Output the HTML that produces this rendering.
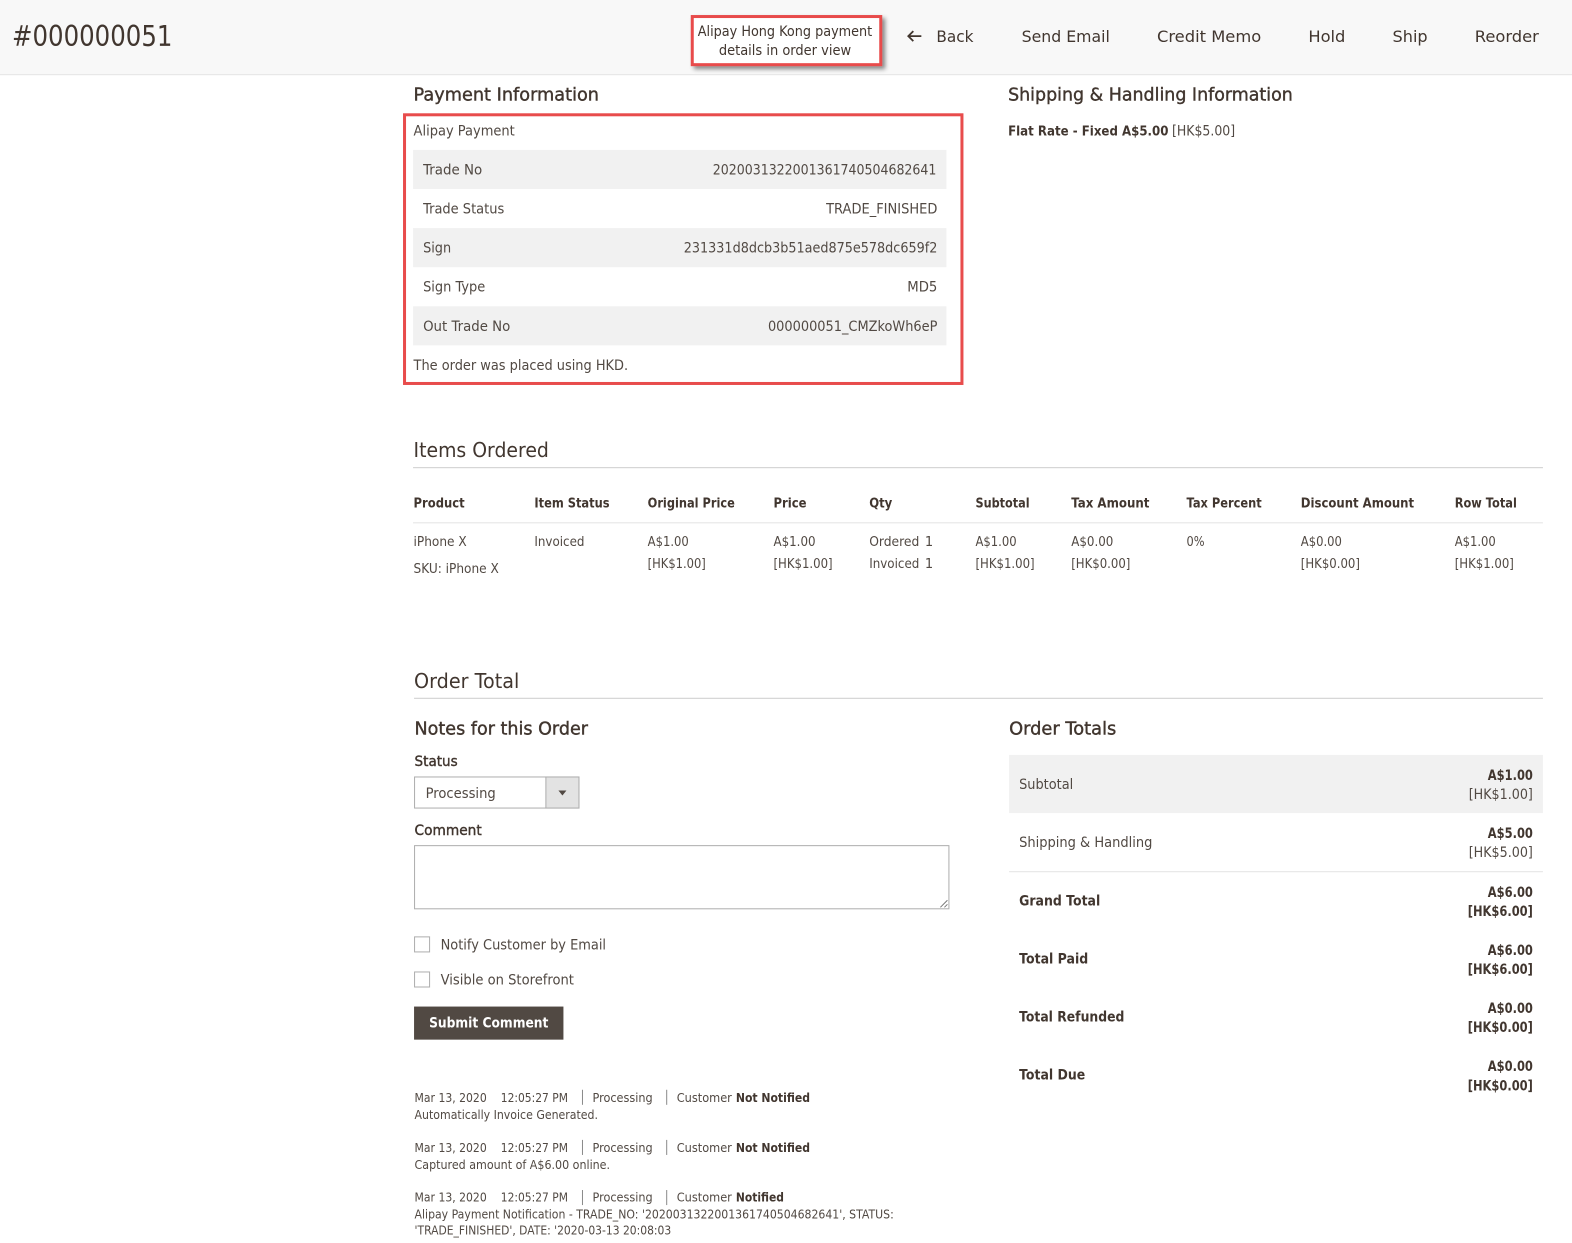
<!DOCTYPE html>
<html lang="en"><head><meta charset="utf-8"><title>Order #000000051</title>
<style>
html,body{margin:0;padding:0;background:#fff}
svg{display:block}
text{font-family:"DejaVu Sans","Liberation Sans",sans-serif;fill:#514943;white-space:pre}
.d{fill:#41362f}
.s{fill:#41362f;stroke:#41362f;stroke-width:.4}
.b{fill:#41362f;font-weight:700}
.f14{font-size:14px}.f13{font-size:13px}.f12{font-size:12px}.f18{font-size:18px}.f16{font-size:16px}
</style></head><body>
<svg width="1572" height="1243" viewBox="0 0 1568 1239.840" xmlns="http://www.w3.org/2000/svg">
<defs><filter id="sh" x="-10%" y="-20%" width="125%" height="150%"><feDropShadow dx="3" dy="3" stdDeviation="2" flood-color="#000" flood-opacity=".45"/></filter></defs>
<rect x="0" y="0" width="1568" height="74" fill="#f8f8f8"/>
<rect x="0" y="74" width="1568" height="1" fill="#e3e3e3"/>
<text class="d" x="12" y="46" font-size="28" textLength="160" lengthAdjust="spacingAndGlyphs">#000000051</text>
<rect x="690.500" y="16.500" width="188" height="48" fill="#fff" stroke="#e84c4c" stroke-width="3" filter="url(#sh)"/>
<text class="d f14" x="696" y="36" textLength="174" lengthAdjust="spacingAndGlyphs">Alipay Hong Kong payment</text>
<text class="d f14" x="717" y="55" textLength="132" lengthAdjust="spacingAndGlyphs">details in order view</text>
<path d="M919 36H906M911 31L906 36L911 41" fill="none" stroke="#41362f" stroke-width="1.800"/>
<text class="d f16" x="934" y="42" textLength="37" lengthAdjust="spacingAndGlyphs">Back</text>
<text class="d f16" x="1019" y="42" textLength="88" lengthAdjust="spacingAndGlyphs">Send Email</text>
<text class="d f16" x="1154" y="42" textLength="104" lengthAdjust="spacingAndGlyphs">Credit Memo</text>
<text class="d f16" x="1305" y="42" textLength="37" lengthAdjust="spacingAndGlyphs">Hold</text>
<text class="d f16" x="1389" y="42" textLength="35" lengthAdjust="spacingAndGlyphs">Ship</text>
<text class="d f16" x="1471" y="42" textLength="64" lengthAdjust="spacingAndGlyphs">Reorder</text>

<text class="s f18" x="412.500" y="100" textLength="185" lengthAdjust="spacingAndGlyphs">Payment Information</text>
<text class="s f18" x="1005.500" y="100" textLength="284" lengthAdjust="spacingAndGlyphs">Shipping &amp; Handling Information</text>
<rect x="403.500" y="114.500" width="556" height="268" fill="none" stroke="#e84c4c" stroke-width="3"/>
<text class="f14" x="412.500" y="135" textLength="101" lengthAdjust="spacingAndGlyphs">Alipay Payment</text>
<rect x="412" y="149.500" width="532" height="39" fill="#f1f1f1"/>
<rect x="412" y="227.500" width="532" height="39" fill="#f1f1f1"/>
<rect x="412" y="305.500" width="532" height="39" fill="#f1f1f1"/>
<text class="f14" x="422" y="174" textLength="59" lengthAdjust="spacingAndGlyphs">Trade No</text>
<text class="f14" x="711" y="174" textLength="223" lengthAdjust="spacingAndGlyphs">2020031322001361740504682641</text>
<text class="f14" x="422" y="213" textLength="81" lengthAdjust="spacingAndGlyphs">Trade Status</text>
<text class="f14" x="824" y="213" textLength="111" lengthAdjust="spacingAndGlyphs">TRADE_FINISHED</text>
<text class="f14" x="422" y="252" textLength="28" lengthAdjust="spacingAndGlyphs">Sign</text>
<text class="f14" x="682" y="252" textLength="253" lengthAdjust="spacingAndGlyphs">231331d8dcb3b51aed875e578dc659f2</text>
<text class="f14" x="422" y="291" textLength="62" lengthAdjust="spacingAndGlyphs">Sign Type</text>
<text class="f14" x="905" y="291" textLength="30" lengthAdjust="spacingAndGlyphs">MD5</text>
<text class="f14" x="422" y="330" textLength="87" lengthAdjust="spacingAndGlyphs">Out Trade No</text>
<text class="f14" x="766" y="330" textLength="169" lengthAdjust="spacingAndGlyphs">000000051_CMZkoWh6eP</text>
<text class="f14" x="412.500" y="369" textLength="214" lengthAdjust="spacingAndGlyphs">The order was placed using HKD.</text>
<text class="b f13" x="1005.500" y="135" textLength="160" lengthAdjust="spacingAndGlyphs">Flat Rate - Fixed A$5.00</text>
<text class="f14" x="1169" y="135" textLength="63" lengthAdjust="spacingAndGlyphs">[HK$5.00]</text>

<text class="d" font-size="20" x="412.500" y="456" textLength="135" lengthAdjust="spacingAndGlyphs">Items Ordered</text>
<rect x="412" y="466" width="1127" height="1" fill="#ccc"/>
<text class="b f13" x="412.500" y="506" textLength="51" lengthAdjust="spacingAndGlyphs">Product</text>
<text class="b f13" x="533" y="506" textLength="75" lengthAdjust="spacingAndGlyphs">Item Status</text>
<text class="b f13" x="646" y="506" textLength="87" lengthAdjust="spacingAndGlyphs">Original Price</text>
<text class="b f13" x="771.500" y="506" textLength="33" lengthAdjust="spacingAndGlyphs">Price</text>
<text class="b f13" x="867" y="506" textLength="23" lengthAdjust="spacingAndGlyphs">Qty</text>
<text class="b f13" x="973" y="506" textLength="54" lengthAdjust="spacingAndGlyphs">Subtotal</text>
<text class="b f13" x="1068.500" y="506" textLength="78" lengthAdjust="spacingAndGlyphs">Tax Amount</text>
<text class="b f13" x="1183.500" y="506" textLength="75" lengthAdjust="spacingAndGlyphs">Tax Percent</text>
<text class="b f13" x="1297.500" y="506" textLength="113" lengthAdjust="spacingAndGlyphs">Discount Amount</text>
<text class="b f13" x="1451" y="506" textLength="62" lengthAdjust="spacingAndGlyphs">Row Total</text>
<rect x="412" y="521" width="1127" height="1" fill="#e3e3e3"/>
<text class="f13" x="412.500" y="544.500" textLength="53" lengthAdjust="spacingAndGlyphs">iPhone X</text>
<text class="f13" x="412.500" y="571.500" textLength="85" lengthAdjust="spacingAndGlyphs">SKU: iPhone X</text>
<text class="f13" x="533" y="544.500" textLength="50" lengthAdjust="spacingAndGlyphs">Invoiced</text>
<text class="f13" x="646" y="544.500" textLength="41" lengthAdjust="spacingAndGlyphs">A$1.00</text>
<text class="f13" x="646" y="566.500" textLength="58" lengthAdjust="spacingAndGlyphs">[HK$1.00]</text>
<text class="f13" x="771.500" y="544.500" textLength="42" lengthAdjust="spacingAndGlyphs">A$1.00</text>
<text class="f13" x="771.500" y="566.500" textLength="59" lengthAdjust="spacingAndGlyphs">[HK$1.00]</text>
<text class="f13" x="867" y="544.500" textLength="50" lengthAdjust="spacingAndGlyphs">Ordered</text>
<text class="f13" x="922.500" y="544.500">1</text>
<text class="f13" x="867" y="566.500" textLength="50" lengthAdjust="spacingAndGlyphs">Invoiced</text>
<text class="f13" x="922.500" y="566.500">1</text>
<text class="f13" x="973" y="544.500" textLength="41" lengthAdjust="spacingAndGlyphs">A$1.00</text>
<text class="f13" x="973" y="566.500" textLength="59" lengthAdjust="spacingAndGlyphs">[HK$1.00]</text>
<text class="f13" x="1068.500" y="544.500" textLength="42" lengthAdjust="spacingAndGlyphs">A$0.00</text>
<text class="f13" x="1068.500" y="566.500" textLength="59" lengthAdjust="spacingAndGlyphs">[HK$0.00]</text>
<text class="f13" x="1183.500" y="544.500" textLength="18" lengthAdjust="spacingAndGlyphs">0%</text>
<text class="f13" x="1297.500" y="544.500" textLength="41" lengthAdjust="spacingAndGlyphs">A$0.00</text>
<text class="f13" x="1297.500" y="566.500" textLength="59" lengthAdjust="spacingAndGlyphs">[HK$0.00]</text>
<text class="f13" x="1451" y="544.500" textLength="41" lengthAdjust="spacingAndGlyphs">A$1.00</text>
<text class="f13" x="1451" y="566.500" textLength="59" lengthAdjust="spacingAndGlyphs">[HK$1.00]</text>

<text class="d" font-size="20" x="413" y="686.500" textLength="105" lengthAdjust="spacingAndGlyphs">Order Total</text>
<rect x="413" y="696" width="1126" height="1" fill="#ccc"/>
<text class="s f18" x="413.500" y="732.500" textLength="173" lengthAdjust="spacingAndGlyphs">Notes for this Order</text>
<text class="s f18" x="1006.500" y="732.500" textLength="107" lengthAdjust="spacingAndGlyphs">Order Totals</text>
<text class="s f14" x="413.500" y="764" textLength="43" lengthAdjust="spacingAndGlyphs">Status</text>
<rect x="413.500" y="775" width="164" height="31" fill="#fff" stroke="#adadad"/>
<rect x="544.500" y="775" width="33" height="31" fill="#e3e3e3" stroke="#adadad"/>
<path d="M557 788.500h8l-4 5z" fill="#514943"/>
<text class="f14" x="424.500" y="796" textLength="70" lengthAdjust="spacingAndGlyphs">Processing</text>
<text class="s f14" x="413.500" y="833" textLength="67" lengthAdjust="spacingAndGlyphs">Comment</text>
<rect x="413.500" y="843.500" width="533" height="63" fill="#fff" stroke="#adadad"/>
<path d="M938 905L945 898M942 905L945 902" stroke="#777" stroke-width="1" fill="none"/>
<rect x="413.500" y="934.500" width="15" height="15" fill="#fff" stroke="#adadad"/>
<text class="f14" x="439.500" y="947" textLength="165" lengthAdjust="spacingAndGlyphs">Notify Customer by Email</text>
<rect x="413.500" y="969.500" width="15" height="15" fill="#fff" stroke="#adadad"/>
<text class="f14" x="439.500" y="982" textLength="133" lengthAdjust="spacingAndGlyphs">Visible on Storefront</text>
<rect x="413" y="1004" width="149" height="33" fill="#514943"/>
<text class="f14" style="fill:#fff;font-weight:700" x="428" y="1025" textLength="119" lengthAdjust="spacingAndGlyphs">Submit Comment</text>

<text class="f12" x="413.500" y="1099" textLength="72" lengthAdjust="spacingAndGlyphs">Mar 13, 2020</text>
<text class="f12" x="499.500" y="1099" textLength="67" lengthAdjust="spacingAndGlyphs">12:05:27 PM</text>
<rect x="580.500" y="1087" width="1" height="15" fill="#8a8a8a"/>
<text class="f12" x="591" y="1099" textLength="60" lengthAdjust="spacingAndGlyphs">Processing</text>
<rect x="664.500" y="1087" width="1" height="15" fill="#8a8a8a"/>
<text class="f12" x="675" y="1099" textLength="55" lengthAdjust="spacingAndGlyphs">Customer</text>
<text class="b f12" x="734" y="1099" textLength="74" lengthAdjust="spacingAndGlyphs">Not Notified</text>
<text class="f12" x="413.500" y="1116" textLength="183" lengthAdjust="spacingAndGlyphs">Automatically Invoice Generated.</text>
<text class="f12" x="413.500" y="1149" textLength="72" lengthAdjust="spacingAndGlyphs">Mar 13, 2020</text>
<text class="f12" x="499.500" y="1149" textLength="67" lengthAdjust="spacingAndGlyphs">12:05:27 PM</text>
<rect x="580.500" y="1137" width="1" height="15" fill="#8a8a8a"/>
<text class="f12" x="591" y="1149" textLength="60" lengthAdjust="spacingAndGlyphs">Processing</text>
<rect x="664.500" y="1137" width="1" height="15" fill="#8a8a8a"/>
<text class="f12" x="675" y="1149" textLength="55" lengthAdjust="spacingAndGlyphs">Customer</text>
<text class="b f12" x="734" y="1149" textLength="74" lengthAdjust="spacingAndGlyphs">Not Notified</text>
<text class="f12" x="413.500" y="1166" textLength="195" lengthAdjust="spacingAndGlyphs">Captured amount of A$6.00 online.</text>
<text class="f12" x="413.500" y="1198.500" textLength="72" lengthAdjust="spacingAndGlyphs">Mar 13, 2020</text>
<text class="f12" x="499.500" y="1198.500" textLength="67" lengthAdjust="spacingAndGlyphs">12:05:27 PM</text>
<rect x="580.500" y="1187" width="1" height="15" fill="#8a8a8a"/>
<text class="f12" x="591" y="1198.500" textLength="60" lengthAdjust="spacingAndGlyphs">Processing</text>
<rect x="664.500" y="1187" width="1" height="15" fill="#8a8a8a"/>
<text class="f12" x="675" y="1198.500" textLength="55" lengthAdjust="spacingAndGlyphs">Customer</text>
<text class="b f12" x="734" y="1198.500" textLength="48" lengthAdjust="spacingAndGlyphs">Notified</text>
<text class="f12" x="413.500" y="1215.500" textLength="478" lengthAdjust="spacingAndGlyphs">Alipay Payment Notification - TRADE_NO: '2020031322001361740504682641', STATUS:</text>
<text class="f12" x="413.500" y="1231.500" textLength="256" lengthAdjust="spacingAndGlyphs">'TRADE_FINISHED', DATE: '2020-03-13 20:08:03</text>

<rect x="1006.500" y="753" width="532.500" height="58" fill="#f1f1f1"/>
<rect x="1006.500" y="869" width="532.500" height="1" fill="#e3e3e3"/>
<text class="f14" x="1016.500" y="787" textLength="54" lengthAdjust="spacingAndGlyphs">Subtotal</text>
<text class="b f14" x="1484" y="778" textLength="45" lengthAdjust="spacingAndGlyphs">A$1.00</text>
<text class="f14" x="1465" y="797" textLength="64" lengthAdjust="spacingAndGlyphs">[HK$1.00]</text>
<text class="f14" x="1016.500" y="845" textLength="133" lengthAdjust="spacingAndGlyphs">Shipping &amp; Handling</text>
<text class="b f14" x="1484" y="836" textLength="45" lengthAdjust="spacingAndGlyphs">A$5.00</text>
<text class="f14" x="1465" y="855" textLength="64" lengthAdjust="spacingAndGlyphs">[HK$5.00]</text>
<text class="b f14" x="1016.500" y="903" textLength="81" lengthAdjust="spacingAndGlyphs">Grand Total</text>
<text class="b f14" x="1484" y="894.500" textLength="45" lengthAdjust="spacingAndGlyphs">A$6.00</text>
<text class="b f14" x="1464" y="913.500" textLength="65" lengthAdjust="spacingAndGlyphs">[HK$6.00]</text>
<text class="b f14" x="1016.500" y="961" textLength="69" lengthAdjust="spacingAndGlyphs">Total Paid</text>
<text class="b f14" x="1484" y="952.500" textLength="45" lengthAdjust="spacingAndGlyphs">A$6.00</text>
<text class="b f14" x="1464" y="971.500" textLength="65" lengthAdjust="spacingAndGlyphs">[HK$6.00]</text>
<text class="b f14" x="1016.500" y="1019" textLength="105" lengthAdjust="spacingAndGlyphs">Total Refunded</text>
<text class="b f14" x="1484" y="1010.500" textLength="45" lengthAdjust="spacingAndGlyphs">A$0.00</text>
<text class="b f14" x="1464" y="1029.500" textLength="65" lengthAdjust="spacingAndGlyphs">[HK$0.00]</text>
<text class="b f14" x="1016.500" y="1077" textLength="66" lengthAdjust="spacingAndGlyphs">Total Due</text>
<text class="b f14" x="1484" y="1068.500" textLength="45" lengthAdjust="spacingAndGlyphs">A$0.00</text>
<text class="b f14" x="1464" y="1087.500" textLength="65" lengthAdjust="spacingAndGlyphs">[HK$0.00]</text>
</svg>
</body></html>
